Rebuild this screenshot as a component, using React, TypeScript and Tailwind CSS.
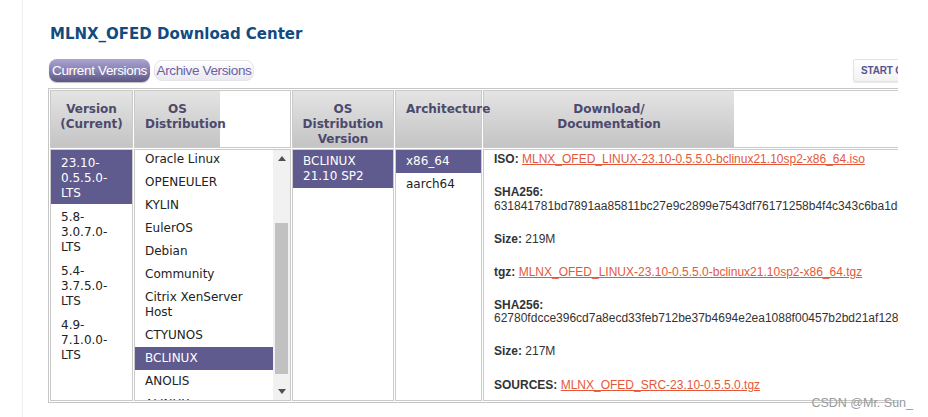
import React from "react";

const versions: string[][] = [
  ["23.10-", "0.5.5.0-", "LTS"],
  ["5.8-", "3.0.7.0-", "LTS"],
  ["5.4-", "3.7.5.0-", "LTS"],
  ["4.9-", "7.1.0.0-", "LTS"],
];

const osList: { lines: string[]; sel?: boolean }[] = [
  { lines: ["Oracle Linux"] },
  { lines: ["OPENEULER"] },
  { lines: ["KYLIN"] },
  { lines: ["EulerOS"] },
  { lines: ["Debian"] },
  { lines: ["Community"] },
  { lines: ["Citrix XenServer", "Host"] },
  { lines: ["CTYUNOS"] },
  { lines: ["BCLINUX"], sel: true },
  { lines: ["ANOLIS"] },
  { lines: ["ALINUX"] },
];

const dv = { fontFamily: '"DejaVu Sans", Verdana, sans-serif' };
const ar = { fontFamily: '"Liberation Sans", Arial, sans-serif' };

function Label({ k }: { k: string }) {
  return <span className="font-bold text-[#333]">{k}</span>;
}

function Link({ t }: { t: string }) {
  return <span className="text-[#e4583a] underline">{t}</span>;
}

export default function App() {
  return (
    <div className="relative flex w-[928px] h-[417px] overflow-hidden bg-white" style={dv}>
      <div className="w-[22px] shrink-0" />
      <div className="border-l border-[#eeeeee] pl-[25px] flex-1 min-w-0">
        <div className="w-[850px] overflow-hidden">
          <h1 className="pt-[25px] pl-[2px] text-[15px] leading-[18px] font-bold text-[#124b80]">
            MLNX_OFED Download Center
          </h1>
          <div className="mt-[15px] flex items-center h-[24px]" style={ar}>
            <div className="ml-[1px] shrink-0 h-[23px] w-[101px] rounded-[8px] bg-gradient-to-b from-[#aaa4cf] via-[#8780b2] to-[#5b5684] text-white text-[13.5px] tracking-[-0.35px] leading-[23px] text-center shadow-[0_1px_1px_rgba(0,0,0,0.25)]">
              Current Versions
            </div>
            <div className="ml-[4px] shrink-0 h-[21px] w-[100px] rounded-[8px] bg-gradient-to-b from-white to-[#e9e9ef] border border-[#e4e4ea] text-[#6b60a6] text-[13.5px] tracking-[-0.35px] leading-[19px] text-center">
              Archive Versions
            </div>
            <div className="ml-[599px] shrink-0 h-[23px] px-[7px] rounded-[2px] border border-[#e2e2e2] bg-gradient-to-b from-white to-[#f2f2f2] shadow-[0_1px_1px_rgba(0,0,0,0.08)] text-[#57548f] text-[10px] tracking-[-0.2px] font-semibold leading-[21px] whitespace-nowrap">
              START OVER
            </div>
          </div>

          <table className="mt-[6px] border border-[#c6c6c6] border-separate border-spacing-[1px]">
            <thead>
              <tr className="text-[12px] leading-[15px] font-bold text-[#4c4a6c]">
                <th className="p-0 border border-[#cacaca] align-top">
                  <div className="w-[81px] h-[56px] pt-[11px] text-center bg-gradient-to-b from-[#e4e4e4] to-[#c4c4c4]">
                    Version
                    <br />
                    (Current)
                  </div>
                </th>
                <th className="p-0 border border-[#cacaca] align-top">
                  <div className="w-[155px] h-[56px]">
                    <div className="w-[85px] h-[56px] pt-[11px] px-[10px] text-center bg-gradient-to-b from-[#e4e4e4] to-[#c4c4c4]">
                      OS
                      <br />
                      Distribution
                    </div>
                  </div>
                </th>
                <th className="p-0 border border-[#cacaca] align-top">
                  <div className="w-[100px] h-[56px] pt-[11px] text-center bg-gradient-to-b from-[#e4e4e4] to-[#c4c4c4]">
                    OS
                    <br />
                    Distribution
                    <br />
                    Version
                  </div>
                </th>
                <th className="p-0 border border-[#cacaca] align-top">
                  <div className="w-[85px] h-[56px] pt-[11px] px-[10px] text-center bg-gradient-to-b from-[#e4e4e4] to-[#c4c4c4] whitespace-nowrap">
                    Architecture
                  </div>
                </th>
                <th className="p-0 border border-[#cacaca] align-top">
                  <div className="w-[250px] h-[56px] pt-[11px] text-center bg-gradient-to-b from-[#e4e4e4] to-[#c4c4c4]">
                    Download/
                    <br />
                    Documentation
                  </div>
                </th>
              </tr>
            </thead>
            <tbody>
              <tr className="text-[12px] leading-[15px] text-[#222]">
                <td className="p-0 border border-[#cacaca] align-top">
                  <div className="w-[81px] h-[250px] overflow-hidden">
                    {versions.map((v, i) => (
                      <div
                        key={i}
                        className={
                          i === 0
                            ? "pt-[6px] pb-[3px] pl-[10px] bg-[#5f5b8e] text-white"
                            : "pt-[6px] pb-[3px] pl-[10px]"
                        }
                      >
                        {v.map((l, j) => (
                          <div key={j}>{l}</div>
                        ))}
                      </div>
                    ))}
                  </div>
                </td>
                <td className="p-0 border border-[#cacaca] align-top">
                  <div className="w-[155px] h-[250px] flex overflow-hidden">
                    <div className="w-[138px] h-[250px] overflow-hidden">
                      <div className="-mt-[2px]">
                        {osList.map((o, i) => (
                          <div
                            key={i}
                            className={
                              o.sel
                                ? "py-[4px] pl-[10px] bg-[#5f5b8e] text-white whitespace-nowrap"
                                : "py-[4px] pl-[10px] whitespace-nowrap"
                            }
                          >
                            {o.lines.map((l, j) => (
                              <div key={j}>{l}</div>
                            ))}
                          </div>
                        ))}
                      </div>
                    </div>
                    <div className="w-[17px] h-[250px] bg-[#f1f1f1] flex flex-col">
                      <div className="h-[17px] flex items-center justify-center">
                        <svg width="8" height="5" viewBox="0 0 8 5">
                          <path d="M4 0 L8 5 L0 5 Z" fill="#505050" />
                        </svg>
                      </div>
                      <div className="h-[56px]" />
                      <div className="ml-[2px] w-[13px] h-[151px] bg-[#c1c1c1]" />
                      <div className="flex-1" />
                      <div className="h-[17px] flex items-center justify-center">
                        <svg width="8" height="5" viewBox="0 0 8 5">
                          <path d="M0 0 L8 0 L4 5 Z" fill="#505050" />
                        </svg>
                      </div>
                    </div>
                  </div>
                </td>
                <td className="p-0 border border-[#cacaca] align-top">
                  <div className="w-[100px] h-[250px]">
                    <div className="pt-[4px] pb-[4px] pl-[10px] bg-[#5f5b8e] text-white">
                      <div>BCLINUX</div>
                      <div>21.10 SP2</div>
                    </div>
                  </div>
                </td>
                <td className="p-0 border border-[#cacaca] align-top">
                  <div className="w-[85px] h-[250px]">
                    <div className="py-[4px] pl-[10px] bg-[#5f5b8e] text-white">x86_64</div>
                    <div className="py-[4px] pl-[10px]">aarch64</div>
                  </div>
                </td>
                <td className="p-0 border border-[#cacaca] align-top">
                  <div
                    className="h-[250px] pt-[3px] pl-[10px] pr-[10px] text-[12px] leading-[13.5px] text-[#333] whitespace-nowrap flex flex-col gap-[19.6px]"
                    style={ar}
                  >
                    <div>
                      <Label k="ISO:" /> <Link t="MLNX_OFED_LINUX-23.10-0.5.5.0-bclinux21.10sp2-x86_64.iso" />
                    </div>
                    <div>
                      <Label k="SHA256:" />
                      <br />
                      631841781bd7891aa85811bc27e9c2899e7543df76171258b4f4c343c6ba1d0f
                    </div>
                    <div>
                      <Label k="Size:" /> 219M
                    </div>
                    <div>
                      <Label k="tgz:" /> <Link t="MLNX_OFED_LINUX-23.10-0.5.5.0-bclinux21.10sp2-x86_64.tgz" />
                    </div>
                    <div>
                      <Label k="SHA256:" />
                      <br />
                      62780fdcce396cd7a8ecd33feb712be37b4694e2ea1088f00457b2bd21af128
                    </div>
                    <div>
                      <Label k="Size:" /> 217M
                    </div>
                    <div>
                      <Label k="SOURCES:" /> <Link t="MLNX_OFED_SRC-23.10-0.5.5.0.tgz" />
                    </div>
                  </div>
                </td>
              </tr>
            </tbody>
          </table>
        </div>
      </div>
      <div
        className="absolute right-[15px] top-[396px] text-[12.5px] leading-[15px] text-[#9a9a9a] whitespace-nowrap"
        style={ar}
      >
        CSDN @Mr. Sun_
      </div>
    </div>
  );
}
